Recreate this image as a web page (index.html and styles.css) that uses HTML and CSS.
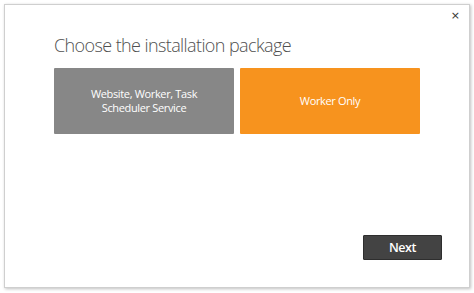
FILE: index.html
```html
<!DOCTYPE html>
<html>
<head>
<meta charset="utf-8">
<link rel="stylesheet" href="styles.css">
</head>
<body>
<div class="dialog">
  <div class="close">×</div>
  <h1 class="title">Choose the installation package</h1>
  <div class="options">
    <div class="option gray">Website, Worker, Task<br>Scheduler Service</div>
    <div class="option orange">Worker Only</div>
  </div>
  <div class="footer">
    <button class="next">Next</button>
  </div>
</div>
</body>
</html>
```
FILE: styles.css
```css
html, body {
  margin: 0;
  padding: 0;
  background: #ffffff;
  width: 474px;
  height: 293px;
  overflow: hidden;
}
body {
  padding: 4px 0 0 4px;
  box-sizing: border-box;
  font-family: "Open Sans", "Noto Sans", sans-serif;
}
.dialog {
  position: relative;
  width: 466px;
  height: 284px;
  box-sizing: border-box;
  border: 1px solid #cfcfcf;
  box-shadow: 1px 1px 3px rgba(0,0,0,0.25);
  background: #fff;
  padding: 0 0 0 49px;
  display: flex;
  flex-direction: column;
}
.close {
  position: absolute;
  top: 4px;
  right: 9px;
  font-size: 11px;
  color: #333;
  font-family: "DejaVu Sans", sans-serif;
}
.title {
  margin: 27px 0 0 0;
  font-weight: 300;
  font-size: 18px;
  line-height: 26px;
  color: #505050;
  letter-spacing: -0.6px;
}
.options {
  display: flex;
  gap: 6px;
  margin-top: 10px;
}
.option {
  width: 180px;
  height: 66px;
  display: flex;
  align-items: center;
  justify-content: center;
  text-align: center;
  color: #fff;
  font-size: 11px;
  line-height: 14px;
  letter-spacing: -0.35px;
  border-radius: 1px;
}
.gray {
  background: #878787;
}
.orange {
  background: #f7931e;
}
.footer {
  margin-top: auto;
  display: flex;
  justify-content: flex-end;
  padding: 0 27px 27px 0;
}
.next {
  width: 79px;
  height: 25px;
  background: #434343;
  border: 1px solid #2e2e2e;
  border-radius: 1px;
  color: #fff;
  font-family: "Open Sans", sans-serif;
  font-size: 12.5px;
  font-weight: 600;
  letter-spacing: -0.4px;
  padding: 0;
}
```
